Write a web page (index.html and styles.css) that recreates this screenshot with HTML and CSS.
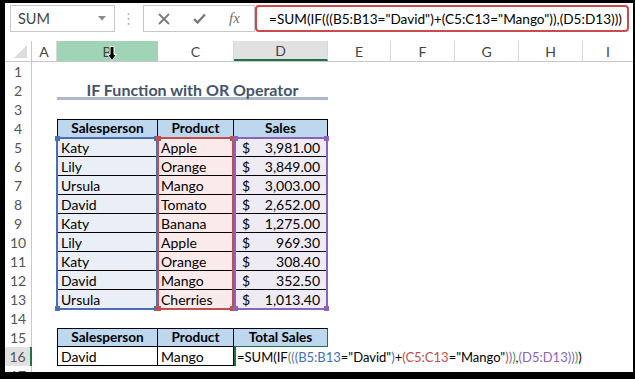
FILE: index.html
```html
<!DOCTYPE html>
<html>
<head>
<meta charset="utf-8">
<link rel="stylesheet" href="styles.css">
</head>
<body>
<div class="frame">
  <div class="app">
    <div class="fbar">
      <div class="namebox">
        <span class="nb-text">SUM</span>
        <svg class="caret" width="8" height="5" viewBox="0 0 8 5"><path d="M0 0H8L4 4.5Z" fill="#8a8a8a"/></svg>
      </div>
      <svg class="grip" width="3" height="14" viewBox="0 0 3 14"><circle cx="1.5" cy="2" r="1" fill="#b0b0b0"/><circle cx="1.5" cy="7" r="1" fill="#b0b0b0"/><circle cx="1.5" cy="12" r="1" fill="#b0b0b0"/></svg>
      <div class="btns">
        <svg width="12" height="12" viewBox="0 0 12 12"><path d="M1 1L11 11M11 1L1 11" stroke="#7a7a7a" stroke-width="1.8"/></svg>
        <svg width="13" height="11" viewBox="0 0 13 11"><path d="M1 6L4.5 9.5L12 1.5" stroke="#7a7a7a" stroke-width="2.4" fill="none"/></svg>
        <span class="fx">fx</span>
      </div>
      <div class="finput">=SUM(IF(((B5:B13="David")+(C5:C13="Mango")),(D5:D13)))</div>
    </div>

    <div class="colheads">
      <div class="corner"><svg width="13" height="13" viewBox="0 0 13 13"><path d="M13 0V13H0Z" fill="#dcdcdc"/></svg></div>
      <div class="ch">A</div>
      <div class="ch ch-hover">B
        <svg class="cursor" width="10" height="15" viewBox="0 0 10 15"><path d="M3 0.5H7V8.5H9.5L5 14.5L0.5 8.5H3Z" fill="#000" stroke="#fff" stroke-width="1"/></svg>
      </div>
      <div class="ch">C</div>
      <div class="ch ch-active">D</div>
      <div class="ch">E</div>
      <div class="ch">F</div>
      <div class="ch">G</div>
      <div class="ch">H</div>
      <div class="ch ch-last">I</div>
    </div>

    <div class="body">
      <div class="rowheads">
        <div class="rh">1</div><div class="rh">2</div><div class="rh">3</div><div class="rh">4</div>
        <div class="rh">5</div><div class="rh">6</div><div class="rh">7</div><div class="rh">8</div>
        <div class="rh">9</div><div class="rh">10</div><div class="rh">11</div><div class="rh">12</div>
        <div class="rh">13</div><div class="rh">14</div><div class="rh">15</div><div class="rh rh-active">16</div>
        <div class="rh">17</div>
      </div>

      <div class="canvas">
        <div class="title">IF Function with OR Operator</div>

        <div class="tbl">
          <div class="th fl">Salesperson</div><div class="th">Product</div><div class="th">Sales</div>

          <div class="td fl tb">Katy</div><div class="td tc">Apple</div><div class="td tdn"><span>$</span><span>3,981.00</span></div>
          <div class="td fl tb">Lily</div><div class="td tc">Orange</div><div class="td tdn"><span>$</span><span>3,849.00</span></div>
          <div class="td fl tb">Ursula</div><div class="td tc">Mango</div><div class="td tdn"><span>$</span><span>3,003.00</span></div>
          <div class="td fl tb">David</div><div class="td tc">Tomato</div><div class="td tdn"><span>$</span><span>2,652.00</span></div>
          <div class="td fl tb">Katy</div><div class="td tc">Banana</div><div class="td tdn"><span>$</span><span>1,275.00</span></div>
          <div class="td fl tb">Lily</div><div class="td tc">Apple</div><div class="td tdn"><span>$</span><span>969.30</span></div>
          <div class="td fl tb">Katy</div><div class="td tc">Orange</div><div class="td tdn"><span>$</span><span>308.40</span></div>
          <div class="td fl tb">David</div><div class="td tc">Mango</div><div class="td tdn"><span>$</span><span>352.50</span></div>
          <div class="td fl tb">Ursula</div><div class="td tc">Cherries</div><div class="td tdn"><span>$</span><span>1,013.40</span></div>

          <div class="rng rng-b"><i class="h tl"></i><i class="h tr"></i><i class="h bl"></i><i class="h br"></i></div>
          <div class="rng rng-c"><i class="h tl"></i><i class="h tr"></i><i class="h bl"></i><i class="h br"></i></div>
          <div class="rng rng-d"><i class="h tl"></i><i class="h tr"></i><i class="h bl"></i><i class="h br"></i></div>
        </div>

        <div class="sum">
          <div class="th fl">Salesperson</div><div class="th">Product</div><div class="th th-total">Total Sales</div>
          <div class="td fl">David</div><div class="td">Mango</div>
          <div class="td edit">=SUM<span class="caretline"></span>(IF<span class="p2">(</span><span class="p3">(</span><span class="rb">(B5:B13</span>="David"<span class="rb">)</span>+<span class="rc">(C5:C13</span>="Mango"<span class="rc">)</span><span class="p3">)</span><span class="p2">)</span>,<span class="rd">(D5:D13)</span><span class="p3">)</span><span class="p2">)</span>)</div>
        </div>
      </div>
    </div>
  </div>
</div>
</body>
</html>
```

FILE: styles.css
```css
* { box-sizing: border-box; }
html, body { margin: 0; padding: 0; }
body {
  background: #000;
  width: 635px;
  height: 379px;
  overflow: hidden;
  font-family: Lato, "Noto Sans", sans-serif;
}
.frame {
  padding: 3px 2px 7px 5px;
  height: 379px;
}
.app {
  background: #fff;
  height: 369px;
  overflow: hidden;
}

/* formula bar */
.fbar {
  height: 38px;
  display: flex;
  align-items: flex-start;
  padding: 2px 4px 0 5px;
}
.namebox {
  width: 105px;
  height: 27px;
  border: 1px solid #c6c6c6;
  display: flex;
  align-items: center;
  justify-content: space-between;
  padding: 0 8px 0 7px;
  color: #444;
  font-size: 14.5px;
}
.grip { margin: 7px 0 0 12px; }
.btns {
  margin-left: 13px;
  width: 112px;
  height: 27px;
  border: 1px solid #c6c6c6;
  display: flex;
  align-items: center;
  padding: 0 0 0 14px;
  gap: 23px;
}
.fx {
  font-family: "Liberation Serif", serif;
  font-style: italic;
  color: #707070;
  font-size: 15px;
}
.finput {
  flex: 1;
  height: 27px;
  border: 2px solid #d0494a;
  border-radius: 4px;
  display: flex;
  align-items: center;
  padding-left: 12px;
  font-size: 13.6px;
  color: #000;
  white-space: nowrap;
}

/* column headers */
.colheads {
  display: grid;
  grid-template-columns: 27px 25px 101px 76px 94px 63px 64px 64px 64px 50px;
  height: 21px;
  border-bottom: 1px solid #c8c8c8;
}
.corner {
  border-right: 1px solid #c8c8c8;
  display: flex;
  align-items: flex-end;
  justify-content: flex-end;
  padding: 0 4px 3px 0;
}
.ch {
  display: flex;
  align-items: center;
  justify-content: center;
  color: #444;
  font-size: 14px;
  border-right: 1px solid #d8d8d8;
  position: relative;
}
.ch-last { border-right: none; }
.ch-hover { background: #9fd5b6; border-right-color: #9fd5b6; }
.ch-active { background: #e1e1e1; border-bottom: 2px solid #217346; }
.cursor { position: absolute; left: 50px; top: 5px; }

/* body */
.body {
  display: grid;
  grid-template-columns: 27px 601px;
}
.rowheads {
  border-right: 1px solid #c8c8c8;
  display: grid;
  grid-auto-rows: 19px;
}
.rh {
  display: flex;
  align-items: center;
  justify-content: center;
  color: #555;
  font-size: 14px;
}
.rh-active {
  background: #e1e1e1;
  border-right: 2px solid #217346;
  margin-right: -1px;
}

.canvas {
  display: grid;
  grid-template-columns: 25px 101px 76px 94px 63px 64px 64px 64px 50px;
  grid-template-rows: repeat(17, 19px);
  font-size: 14px;
  color: #000;
}
.title {
  grid-column: 2 / 5;
  grid-row: 2;
  border-bottom: 3px solid #acb9ca;
  text-align: center;
  font-weight: 700;
  font-size: 16px;
  color: #44546a;
  line-height: 17px;
}

.tbl, .sum {
  grid-column: 2 / 5;
  display: grid;
  grid-template-columns: 101px 76px 94px;
  grid-auto-rows: 19px;
  position: relative;
}
.tbl { grid-row: 4 / 14; }
.sum { grid-row: 15 / 17; }

.th, .td {
  border-right: 1px solid #000;
  border-bottom: 1px solid #000;
  display: flex;
  align-items: flex-end;
  padding: 0 3px 0 3px;
  line-height: 17px;
  white-space: nowrap;
}
.th {
  background: #bdd7ee;
  border-top: 1px solid #000;
  justify-content: center;
  font-weight: 700;
  font-size: 13.6px;
}
.fl { border-left: 1px solid #000; }
.tb { background: #e9eef7; }
.tc { background: #fbeaea; }
.tdn { background: #efebf5; justify-content: space-between; padding: 0 7px 0 8px; }

/* formula reference highlights drawn over the cells */
.rng {
  position: absolute;
  top: 18px;
  height: 173px;
  border: 2px solid #4a6fb6;
  z-index: 2;
}
.rng-b { left: -1px; width: 102px; }
.rng-c { left: 100px; width: 77px; border-color: #c0504d; }
.rng-d { left: 177px; width: 94px; border-color: #8a64b8; }
.h {
  position: absolute;
  width: 5px;
  height: 5px;
}
.rng-b .h { background: #4a6fb6; }
.rng-c .h { background: #c0504d; }
.rng-d .h { background: #8a64b8; }
.tl { left: -3px; top: -3px; }
.tr { right: -3px; top: -3px; }
.bl { left: -3px; bottom: -3px; }
.br { right: -3px; bottom: -3px; }

.th-total { border-right: 1px solid #217346; }
.edit {
  border: none;
  border-left: 2px solid #217346;
  border-top: 1px solid #217346;
  margin-top: -1px;
  padding-left: 1px;
  overflow: visible;
  position: relative;
  z-index: 3;
  font-size: 13px;
}
.caretline {
  display: inline-block;
  width: 1px;
  height: 16px;
  background: #000;
  margin: 0 0 1px 0;
}
.rb { color: #3f6ec2; }
.rc { color: #c0504d; }
.rd { color: #8a64b8; }
.p2 { color: #3f9a4a; }
.p3 { color: #8a64b8; }
```
